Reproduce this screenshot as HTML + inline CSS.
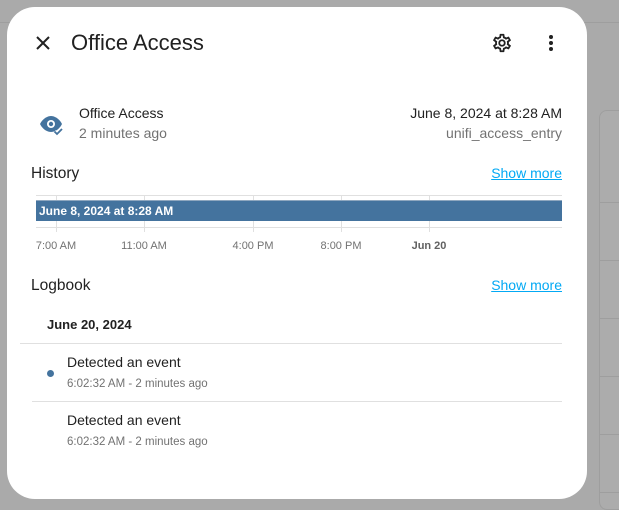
<!DOCTYPE html>
<html><head><meta charset="utf-8"><style>
*{margin:0;padding:0;box-sizing:border-box}
body{width:619px;height:507px;overflow:hidden;background:#aaaaaa;font-family:"Liberation Sans",sans-serif;position:relative;color:#212121}
.bgline{position:absolute;background:#9e9e9e}
.dlg{position:absolute;left:7px;top:7px;width:580px;height:492px;background:#fff;border-radius:28px;overflow:hidden}
.a{position:absolute;white-space:nowrap}
.link{color:#03a9f4;text-decoration:underline;font-size:14px}
.sec{font-size:15.5px;color:#212121}
.muted{color:#727272}
.lbl{position:absolute;top:233px;font-size:11px;color:#727272;transform:translateX(-50%);white-space:nowrap}
.g{position:absolute;top:188px;width:1px;height:37px;background:#e0e0e0}
</style></head><body>
<div class="bgline" style="left:0;top:22px;width:619px;height:1px"></div>
<div style="position:absolute;left:599px;top:110px;width:30px;height:400px;border:1px solid #9e9e9e;border-radius:8px;background:#acacac"></div>
<div class="bgline" style="left:599px;top:202px;width:20px;height:1px"></div>
<div class="bgline" style="left:599px;top:260px;width:20px;height:1px"></div>
<div class="bgline" style="left:599px;top:318px;width:20px;height:1px"></div>
<div class="bgline" style="left:599px;top:376px;width:20px;height:1px"></div>
<div class="bgline" style="left:599px;top:434px;width:20px;height:1px"></div>
<div class="bgline" style="left:599px;top:492px;width:20px;height:1px"></div>
<div class="dlg">
 <svg class="a" style="left:27px;top:27px" width="18" height="18" viewBox="0 0 18 18"><path d="M3 3L15 15M15 3L3 15" stroke="#212121" stroke-width="2"/></svg>
 <div class="a" style="left:64px;top:23px;font-size:22px;color:#212121">Office Access</div>
 <svg class="a" style="left:484px;top:25px" width="22" height="22" viewBox="0 0 24 24"><path fill="#212121" d="M12,8A4,4 0 0,1 16,12A4,4 0 0,1 12,16A4,4 0 0,1 8,12A4,4 0 0,1 12,8M12,10A2,2 0 0,0 10,12A2,2 0 0,0 12,14A2,2 0 0,0 14,12A2,2 0 0,0 12,10M10,22C9.750,22 9.540,21.820 9.500,21.580L9.130,18.930C8.500,18.680 7.960,18.340 7.440,17.940L4.950,18.950C4.730,19.030 4.460,18.950 4.340,18.730L2.340,15.270C2.210,15.050 2.270,14.780 2.460,14.630L4.570,12.970L4.500,12L4.570,11L2.460,9.370C2.270,9.220 2.210,8.950 2.340,8.730L4.340,5.270C4.460,5.050 4.730,4.960 4.950,5.050L7.440,6.050C7.960,5.660 8.500,5.320 9.130,5.070L9.500,2.420C9.540,2.180 9.750,2 10,2H14C14.250,2 14.460,2.180 14.500,2.420L14.870,5.070C15.500,5.320 16.040,5.660 16.560,6.050L19.050,5.050C19.270,4.960 19.540,5.050 19.660,5.270L21.660,8.730C21.790,8.950 21.730,9.220 21.540,9.370L19.430,11L19.500,12L19.430,13L21.540,14.630C21.730,14.780 21.790,15.050 21.660,15.270L19.660,18.730C19.540,18.950 19.270,19.040 19.050,18.950L16.560,17.950C16.040,18.340 15.500,18.680 14.870,18.930L14.500,21.580C14.460,21.820 14.250,22 14,22H10M11.250,4L10.880,6.610C9.680,6.860 8.620,7.500 7.850,8.390L5.440,7.350L4.690,8.650L6.800,10.200C6.400,11.370 6.400,12.640 6.800,13.800L4.680,15.360L5.430,16.660L7.860,15.620C8.630,16.500 9.680,17.140 10.870,17.380L11.240,20H12.760L13.130,17.390C14.320,17.140 15.370,16.500 16.140,15.620L18.570,16.660L19.320,15.360L17.200,13.810C17.600,12.640 17.600,11.370 17.200,10.200L19.310,8.650L18.560,7.350L16.150,8.390C15.380,7.500 14.320,6.860 13.120,6.620L12.750,4H11.250Z"/></svg>
 <svg class="a" style="left:538px;top:27px" width="12" height="18" viewBox="0 0 12 18"><circle cx="6" cy="3" r="2" fill="#212121"/><circle cx="6" cy="9" r="2" fill="#212121"/><circle cx="6" cy="15" r="2" fill="#212121"/></svg>

 <svg class="a" style="left:32px;top:107px" width="26" height="24" viewBox="0 0 26 24"><path d="M1 10C4 4 9 2 12 2C15 2 20 4 23 10C20 16 15 18 12 18C9 18 4 16 1 10Z" fill="#44739e"/><circle cx="12" cy="10" r="4" fill="#fff"/><circle cx="12" cy="10" r="2.2" fill="#44739e"/><path d="M15.5 17.5L18 20L23 15" stroke="#fff" stroke-width="4" fill="none"/><path d="M15.5 17.5L18 20L23 15" stroke="#44739e" stroke-width="1.8" fill="none"/></svg>
 <div class="a" style="left:72px;top:98px;font-size:14px">Office Access</div>
 <div class="a muted" style="left:72px;top:118px;font-size:14px">2 minutes ago</div>
 <div class="a" style="right:25px;top:98px;font-size:14px">June 8, 2024 at 8:28 AM</div>
 <div class="a muted" style="right:25px;top:118px;font-size:14px">unifi_access_entry</div>

 <div class="a sec" style="left:24px;top:158px">History</div>
 <div class="a link" style="right:25px;top:158px">Show more</div>
 <div class="a" style="left:29px;top:188px;width:526px;height:1px;background:#e0e0e0"></div>
 <div class="a" style="left:29px;top:220px;width:526px;height:1px;background:#e0e0e0"></div>
 <div class="g" style="left:49px"></div>
 <div class="g" style="left:137px"></div>
 <div class="g" style="left:246px"></div>
 <div class="g" style="left:334px"></div>
 <div class="g" style="left:422px"></div>
 <div class="a" style="left:29px;top:193px;width:526px;height:21px;background:#44739e;border-top:1px solid #8fa7bf"></div>
 <div class="a" style="left:32px;top:197px;font-size:12px;font-weight:bold;color:#fff">June 8, 2024 at 8:28 AM</div>
 <div class="lbl" style="left:49px">7:00 AM</div>
 <div class="lbl" style="left:137px">11:00 AM</div>
 <div class="lbl" style="left:246px">4:00 PM</div>
 <div class="lbl" style="left:334px">8:00 PM</div>
 <div class="lbl" style="left:422px;font-weight:bold;color:#616161">Jun 20</div>

 <div class="a sec" style="left:24px;top:270px">Logbook</div>
 <div class="a link" style="right:25px;top:270px">Show more</div>
 <div class="a" style="left:40px;top:310px;font-size:13px;font-weight:bold">June 20, 2024</div>
 <div class="a" style="left:13px;top:336px;width:542px;height:1px;background:#e0e0e0"></div>
 <div class="a" style="left:40px;top:363px;width:7px;height:7px;border-radius:50%;background:#44739e"></div>
 <div class="a" style="left:60px;top:347px;font-size:14px">Detected an event</div>
 <div class="a muted" style="left:60px;top:371px;font-size:11.5px">6:02:32 AM - 2 minutes ago</div>
 <div class="a" style="left:25px;top:394px;width:530px;height:1px;background:#e0e0e0"></div>
 <div class="a" style="left:60px;top:405px;font-size:14px">Detected an event</div>
 <div class="a muted" style="left:60px;top:429px;font-size:11.5px">6:02:32 AM - 2 minutes ago</div>
</div>
</body></html>
